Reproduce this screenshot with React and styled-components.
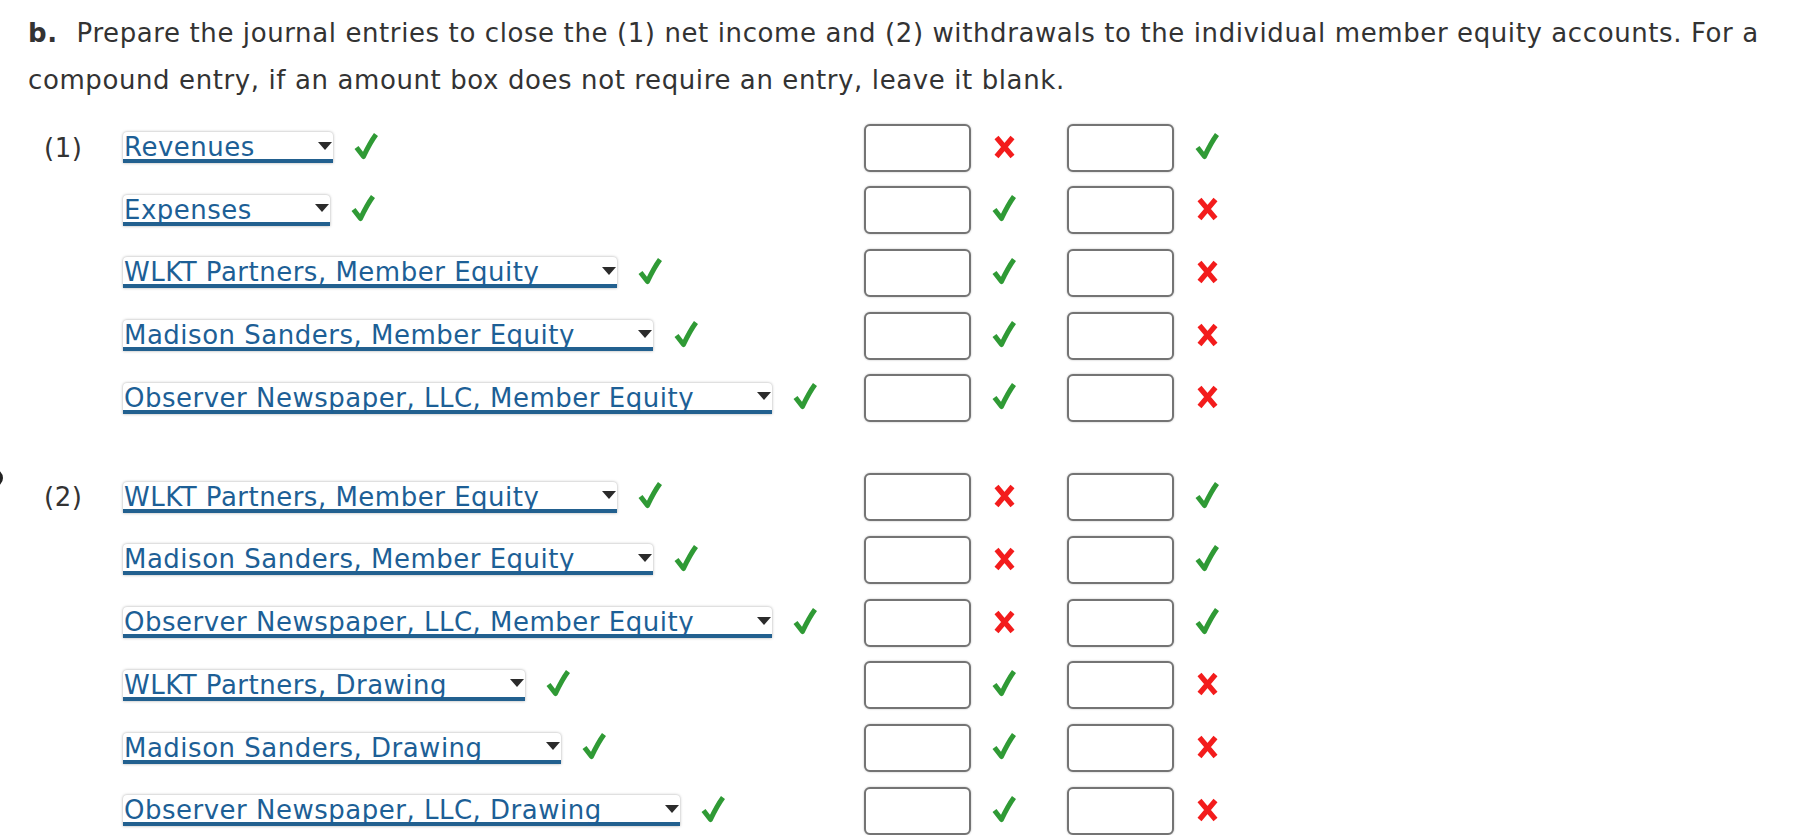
import React from "react";
import styled, { createGlobalStyle } from "styled-components";

const GlobalStyle = createGlobalStyle`
  body {
    margin: 0;
    background: #fff;
  }
`;

const Page = styled.div`
  padding: 10px 0 0 28px;
  font-family: "DejaVu Sans", Verdana, sans-serif;
  font-size: 26px;
  color: #333;
`;

const Prompt = styled.p`
  margin: 0;
  width: 1770px;
  line-height: 47px;
  letter-spacing: 0.6px;
  b {
    font-weight: bold;
    margin-right: 10px;
  }
`;

const Sections = styled.div`
  margin-top: 19.5px;
  display: flex;
  flex-direction: column;
  gap: 51px;
`;

const Section = styled.div`
  position: relative;
  display: flex;
  flex-direction: column;
  gap: 14.7px;

  &::before {
    content: ${(p) => (p.$marker ? '""' : "none")};
    position: absolute;
    left: -43px;
    top: -4px;
    width: 12px;
    height: 12px;
    border: 3px solid #222;
    border-radius: 50%;
  }
`;

const Row = styled.div`
  display: flex;
  align-items: center;
  height: 48px;
`;

const Label = styled.div`
  width: 95px;
  padding-left: 16px;
  box-sizing: border-box;
  letter-spacing: 0.5px;
`;

const AccountCell = styled.div`
  width: 741px;
  display: flex;
  align-items: center;
  gap: 21px;
`;

const Select = styled.div`
  display: inline-flex;
  align-items: center;
  height: 27px;
  padding: 0 1px;
  background: #fff;
  border-radius: 4px 4px 0 0;
  border-bottom: 4px solid #22608f;
  box-shadow: 0 0 3px rgba(0, 0, 0, 0.35);
  color: #1d5f96;
`;

const SelectText = styled.span`
  line-height: 26px;
  padding-top: 3px;
  white-space: nowrap;
  letter-spacing: 0.5px;
`;

const Arrow = styled.span`
  margin-left: 63px;
  width: 0;
  height: 0;
  border-left: 7px solid transparent;
  border-right: 7px solid transparent;
  border-top: 8px solid #2b2b2b;
`;

const AmountCell = styled.div`
  display: flex;
  align-items: center;
  gap: 21px;
  width: ${(p) => p.$width || "auto"};
`;

const AmountBox = styled.div`
  width: 107px;
  height: 48px;
  box-sizing: border-box;
  border: 2px solid #747474;
  border-radius: 6px;
  background: #fff;
  box-shadow: 0 0 2px rgba(0, 0, 0, 0.3);
`;

const MarkWrap = styled.span`
  display: inline-flex;
  width: 24px;
  justify-content: center;
  margin-top: ${(p) => (p.$ok ? "-4px" : "-2px")};
`;

const Check = () => (
  <svg width="24" height="28" viewBox="0 0 24 28">
    <path
      d="M2.5 15.5 L9.5 24.5 C13 17 16.5 10 22 2.5"
      fill="none"
      stroke="#2f9a35"
      strokeWidth="5"
      strokeLinejoin="round"
    />
  </svg>
);

const Cross = () => (
  <svg width="21" height="24" viewBox="0 0 21 24">
    <path
      d="M2.5 2.5 L18.5 21.5 M18.5 2.5 L2.5 21.5"
      fill="none"
      stroke="#f31c1c"
      strokeWidth="5.2"
    />
  </svg>
);

const Mark = ({ ok }) => <MarkWrap $ok={ok}>{ok ? <Check /> : <Cross />}</MarkWrap>;

const sections = [
  {
    label: "(1)",
    rows: [
      ["Revenues", false, true],
      ["Expenses", true, false],
      ["WLKT Partners, Member Equity", true, false],
      ["Madison Sanders, Member Equity", true, false],
      ["Observer Newspaper, LLC, Member Equity", true, false],
    ],
  },
  {
    label: "(2)",
    marker: true,
    rows: [
      ["WLKT Partners, Member Equity", false, true],
      ["Madison Sanders, Member Equity", false, true],
      ["Observer Newspaper, LLC, Member Equity", false, true],
      ["WLKT Partners, Drawing", true, false],
      ["Madison Sanders, Drawing", true, false],
      ["Observer Newspaper, LLC, Drawing", true, false],
    ],
  },
];

const App = () => (
  <Page>
    <GlobalStyle />
    <Prompt>
      <b>b.</b> Prepare the journal entries to close the (1) net income and (2)
      withdrawals to the individual member equity accounts. For a compound
      entry, if an amount box does not require an entry, leave it blank.
    </Prompt>
    <Sections>
      {sections.map((section) => (
        <Section key={section.label} $marker={section.marker}>
          {section.rows.map(([account, debitOk, creditOk], i) => (
            <Row key={i}>
              <Label>{i === 0 ? section.label : ""}</Label>
              <AccountCell>
                <Select>
                  <SelectText>{account}</SelectText>
                  <Arrow />
                </Select>
                <Mark ok />
              </AccountCell>
              <AmountCell $width="203px">
                <AmountBox />
                <Mark ok={debitOk} />
              </AmountCell>
              <AmountCell>
                <AmountBox />
                <Mark ok={creditOk} />
              </AmountCell>
            </Row>
          ))}
        </Section>
      ))}
    </Sections>
  </Page>
);

export default App;
